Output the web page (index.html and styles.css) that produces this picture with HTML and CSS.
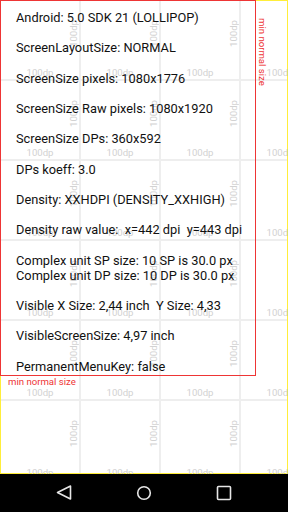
FILE: index.html
```html
<!DOCTYPE html>
<html lang="en">
<head>
  <meta charset="UTF-8" />
  <meta name="viewport" content="width=device-width, initial-scale=1.0"/>
  <title>Screen Info</title>
  <link rel="stylesheet" href="styles.css">
</head>
<body>

<div class="screen">
  <div class="grid">
    <!-- 4 x 6 cells of 100dp, labels only; lines are the background -->
    <div class="cell"><span class="h">100dp</span><span class="v">100dp</span></div>
    <div class="cell"><span class="h">100dp</span><span class="v">100dp</span></div>
    <div class="cell"><span class="h">100dp</span><span class="v">100dp</span></div>
    <div class="cell"><span class="h">100dp</span><span class="v">100dp</span></div>
    <div class="cell"><span class="h">100dp</span><span class="v">100dp</span></div>
    <div class="cell"><span class="h">100dp</span><span class="v">100dp</span></div>
    <div class="cell"><span class="h">100dp</span><span class="v">100dp</span></div>
    <div class="cell"><span class="h">100dp</span><span class="v">100dp</span></div>
    <div class="cell"><span class="h">100dp</span><span class="v">100dp</span></div>
    <div class="cell"><span class="h">100dp</span><span class="v">100dp</span></div>
    <div class="cell"><span class="h">100dp</span><span class="v">100dp</span></div>
    <div class="cell"><span class="h">100dp</span><span class="v">100dp</span></div>
    <div class="cell"><span class="h">100dp</span><span class="v">100dp</span></div>
    <div class="cell"><span class="h">100dp</span><span class="v">100dp</span></div>
    <div class="cell"><span class="h">100dp</span><span class="v">100dp</span></div>
    <div class="cell"><span class="h">100dp</span><span class="v">100dp</span></div>
    <div class="cell"><span class="h">100dp</span><span class="v">100dp</span></div>
    <div class="cell"><span class="h">100dp</span><span class="v">100dp</span></div>
    <div class="cell"><span class="h">100dp</span><span class="v">100dp</span></div>
    <div class="cell"><span class="h">100dp</span><span class="v">100dp</span></div>
    <div class="cell"><span class="h">100dp</span><span class="v">100dp</span></div>
    <div class="cell"><span class="h">100dp</span><span class="v">100dp</span></div>
    <div class="cell"><span class="h">100dp</span><span class="v">100dp</span></div>
    <div class="cell"><span class="h">100dp</span><span class="v">100dp</span></div>
  </div>

  <div class="info">
    <p>Android: 5.0 SDK 21 (LOLLIPOP)</p>
    <p>ScreenLayoutSize: NORMAL</p>
    <p>ScreenSize pixels: 1080x1776</p>
    <p>ScreenSize Raw pixels: 1080x1920</p>
    <p>ScreenSize DPs: 360x592</p>
    <p>DPs koeff: 3.0</p>
    <p>Density: XXHDPI (DENSITY_XXHIGH)</p>
    <p>Density raw value:&nbsp; x=442 dpi&nbsp; y=443 dpi</p>
    <p>Complex unit SP size: 10 SP is 30.0 px<br>Complex unit DP size: 10 DP is 30.0 px</p>
    <p>Visible X Size: 2,44 inch&nbsp; Y Size: 4,33</p>
    <p>VisibleScreenSize: 4,97 inch</p>
    <p>PermanentMenuKey: false</p>
    <span class="min-label bottom">min normal size</span>
    <span class="min-label side">min normal size</span>
  </div>
</div>

<div class="navbar">
  <svg width="16" height="16" viewBox="0 0 16 16">
    <path d="M1.5 7.5 L14.5 1 L14.5 14 Z" fill="none" stroke="#e6e6e6" stroke-width="1.6" stroke-linejoin="round"/>
  </svg>
  <svg width="16" height="16" viewBox="0 0 16 16">
    <circle cx="8" cy="8" r="6.3" fill="none" stroke="#e6e6e6" stroke-width="1.6"/>
  </svg>
  <svg width="16" height="16" viewBox="0 0 16 16">
    <rect x="1.5" y="1.5" width="13" height="13" rx="1" fill="none" stroke="#e6e6e6" stroke-width="1.6"/>
  </svg>
</div>

</body>
</html>
```

FILE: styles.css
```css
body {
  margin: 0;
  background-color: #fff;
  font-family: Roboto, "Noto Sans", sans-serif;
}

.screen {
  position: relative;
  width: 288px;
  height: 474px;
  overflow: hidden;
  background-color: #fff;
  background-image:
    linear-gradient(to right, #eeeeee 0 2px, transparent 2px),
    linear-gradient(to bottom, #eeeeee 0 2px, transparent 2px);
  background-size: 80px 80px;
  background-position: 79px 0, 0 79px;
  box-shadow: inset 0 0 0 1px #ffee3a;
}

.grid {
  display: grid;
  grid-template-columns: repeat(4, 80px);
  grid-auto-rows: 80px;
  width: 320px;
}

.cell {
  display: grid;
  font-size: 9.6px;
  line-height: 11px;
  color: #d2d2d2;
}

.cell .h {
  grid-area: 1 / 1;
  justify-self: center;
  align-self: end;
  margin-bottom: 2px;
}

.cell .v {
  grid-area: 1 / 1;
  justify-self: end;
  align-self: start;
  margin-top: 20px;
  margin-right: 1px;
  writing-mode: vertical-rl;
  transform: rotate(180deg);
}

.info {
  position: absolute;
  top: 0;
  left: 0;
  box-sizing: border-box;
  width: 256px;
  height: 376px;
  padding: 9px 0 0 15px;
  border: 1px solid #ee3535;
  color: #111;
  font-size: 12.8px;
  line-height: 15.17px;
}

.info p {
  margin: 0 0 15.17px;
  white-space: nowrap;
}

.min-label {
  position: absolute;
  color: #ee3535;
  font-size: 9.6px;
  line-height: 11px;
  white-space: nowrap;
}

.min-label.bottom {
  top: 100%;
  left: 7px;
  margin-top: 1px;
}

.min-label.side {
  left: 100%;
  top: 17px;
  margin-left: 2px;
  writing-mode: vertical-rl;
}

.navbar {
  display: flex;
  justify-content: space-between;
  align-items: center;
  height: 38px;
  padding: 0 56px;
  background-color: #000;
}
```
